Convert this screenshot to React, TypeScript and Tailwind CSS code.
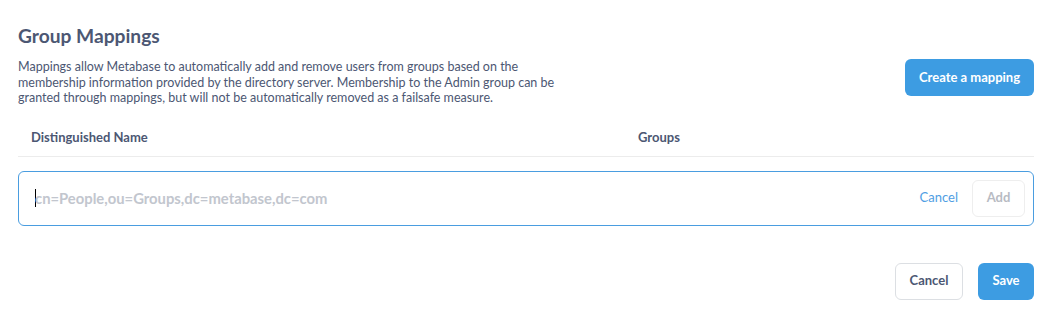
export default function App() {
  return (
    <div
      className="min-h-[313px] w-full bg-white pl-[18px] pr-[20px] pt-[23px] text-[#4c5773]"
      style={{ fontFamily: "Lato, 'Noto Sans', sans-serif" }}
    >
      <h2 className="text-[19.2px] font-bold leading-[26px]">Group Mappings</h2>

      <div className="mt-[10px] flex items-start justify-between">
        <p className="w-[570px] text-[12.5px] leading-[15.5px] text-[#4c5773]">
          Mappings allow Metabase to automatically add and remove users from groups based on the
          membership information provided by the directory server. Membership to the Admin group can be
          granted through mappings, but will not be automatically removed as a failsafe measure.
        </p>
        <button
          type="button"
          className="h-[37px] w-[129px] rounded-[6px] bg-[#3d9ce2] text-[13px] font-bold text-white"
        >
          Create a mapping
        </button>
      </div>

      <div className="mt-[12px] grid h-[39px] grid-cols-[620px_1fr] items-center border-b border-[#ececec] pt-[3px] text-[13px] font-bold">
        <div className="pl-[13px]">Distinguished Name</div>
        <div>Groups</div>
      </div>

      <div className="mt-[14px] flex h-[55px] items-center rounded-[6px] border border-[#4a9de0] pl-[16px] pr-[8px]">
        <div className="flex flex-1 items-center">
          <span className="mr-[-1px] h-[18px] w-[1px] bg-black" />
          <span className="text-[14.8px] font-bold text-[#c2c6ce]">cn=People,ou=Groups,dc=metabase,dc=com</span>
        </div>
        <button type="button" className="mr-[14px] text-[13px] text-[#509ee3]">
          Cancel
        </button>
        <button
          type="button"
          className="h-[37px] w-[53px] rounded-[6px] border border-[#eeeeee] text-[13px] font-bold text-[#b8bbc3]"
        >
          Add
        </button>
      </div>

      <div className="mt-[37px] flex justify-end gap-[15px]">
        <button
          type="button"
          className="h-[37px] w-[68px] rounded-[6px] border border-[#dcdfe3] text-[13px] font-bold text-[#4c5773]"
        >
          Cancel
        </button>
        <button
          type="button"
          className="h-[37px] w-[56px] rounded-[6px] bg-[#3d9ce2] text-[13px] font-bold text-white"
        >
          Save
        </button>
      </div>
    </div>
  );
}
